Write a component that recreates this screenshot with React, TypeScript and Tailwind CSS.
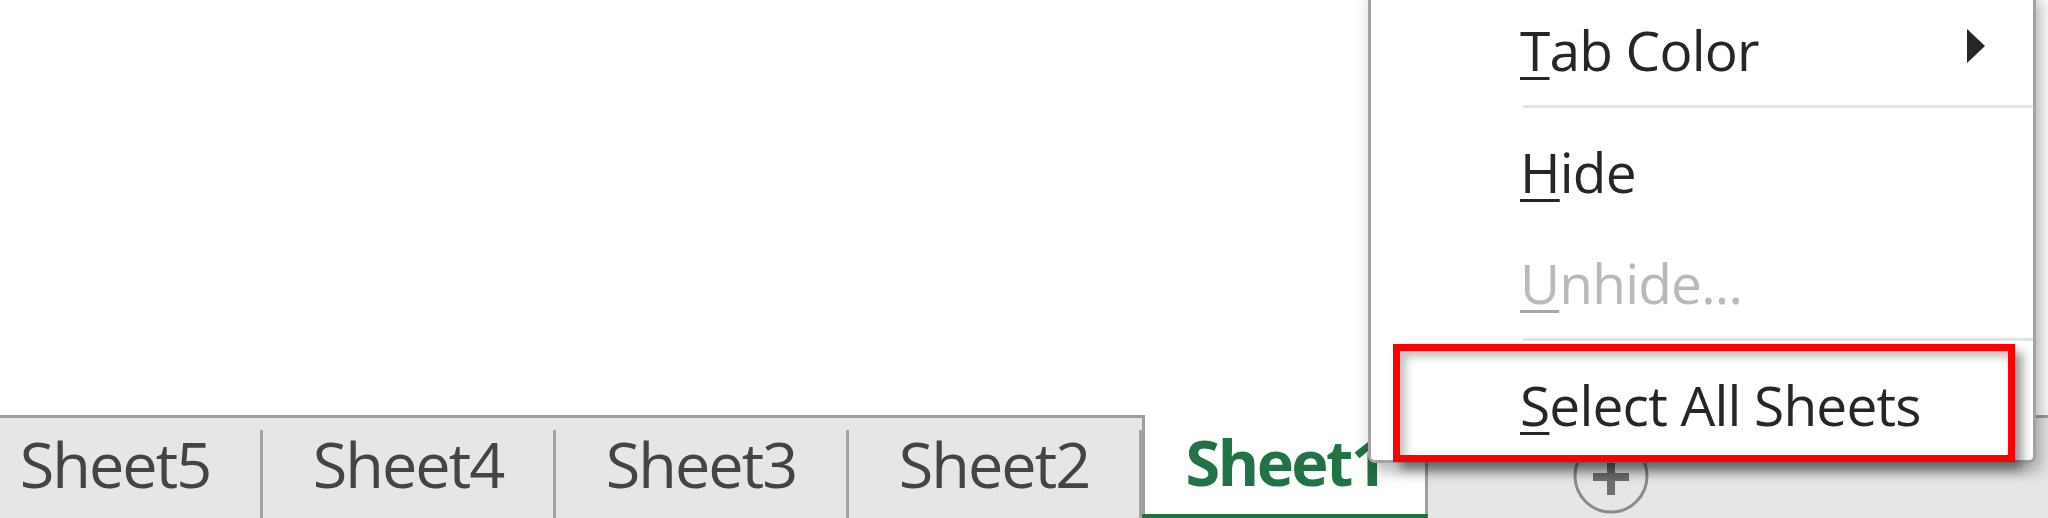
const font = { fontFamily: '"Open Sans", "Noto Sans", sans-serif' };

const inactiveTabs = ["Sheet5", "Sheet4", "Sheet3", "Sheet2"];

function Key({ ch, dim }: { ch: string; dim?: boolean }) {
  return (
    <span
      className={`underline decoration-[3px] underline-offset-[6px] ${
        dim ? "decoration-[#a8a8a8]" : "decoration-[#262626]"
      }`}
    >
      {ch}
    </span>
  );
}

function MenuItem({
  children,
  dim,
  arrow,
  boxed,
}: {
  children: React.ReactNode;
  dim?: boolean;
  arrow?: boolean;
  boxed?: boolean;
}) {
  return (
    <div className="relative flex h-[111px] items-center justify-between pl-[149px] pr-[48px]">
      <span
        className={`text-[55px] leading-none tracking-[-0.8px] ${
          dim ? "text-[#b9b9b9]" : "text-[#262626]"
        }`}
      >
        {children}
      </span>
      {arrow && (
        <svg width="18" height="34" viewBox="0 0 18 34" className="mb-[7px]">
          <polygon points="0,0 18,17 0,34" fill="#262626" />
        </svg>
      )}
      {boxed && (
        // red annotation frame drawn over the hovered item
        <div className="pointer-events-none absolute left-[22px] right-[18px] top-[-5px] bottom-[-2px] border-[7px] border-[#ff0000] shadow-[7px_8px_10px_rgba(0,0,0,0.42),inset_6px_6px_9px_rgba(0,0,0,0.24)]" />
      )}
    </div>
  );
}

function Separator() {
  return (
    <div className="h-[11px] pl-[152px]">
      <div className="h-[3px] bg-[#e3e3e3]" />
    </div>
  );
}

export default function App() {
  return (
    <div
      className="relative flex h-[518px] w-[2048px] flex-col overflow-hidden bg-white"
      style={font}
    >
      {/* sheet area */}
      <div className="h-[415px] bg-white" />

      {/* sheet tab bar */}
      <div className="flex h-[103px] items-stretch border-t-[3px] border-[#9f9f9f] bg-[#e6e6e6]">
        <div className="ml-[-30px] flex items-stretch">
          {inactiveTabs.map((name) => (
            <div key={name} className="flex items-stretch">
              <div className="flex w-[290px] items-center justify-center pb-[10px] text-[63px] leading-none tracking-[-2px] text-[#444444]">
                {name}
              </div>
              <div className="mt-[12px] w-[3px] bg-[#a3a3a3]" />
            </div>
          ))}
        </div>
        <div className="mt-[-3px] flex w-[286px] flex-col bg-white">
          <div className="flex flex-1 items-center justify-center border-x-[3px] border-[#9f9f9f] pb-[6px] text-[63px] font-bold leading-none tracking-[-2.5px] text-[#217346]">
            Sheet1
          </div>
          <div className="h-[4px] bg-[#217346]" />
        </div>
        <svg
          width="80"
          height="80"
          viewBox="0 0 80 80"
          className="ml-[143px] mt-[18px] shrink-0"
        >
          <circle cx="40" cy="40" r="36" fill="none" stroke="#8a8a8a" strokeWidth="3" />
          <rect x="22" y="37" width="36" height="8" fill="#6e6e6e" />
          <rect x="36" y="23" width="8" height="36" fill="#6e6e6e" />
        </svg>
      </div>

      {/* context menu */}
      <div className="absolute left-[1368px] top-[-9px] w-[668px] rounded-b-[7px] border-[3px] border-[#a3a3a3] bg-white shadow-[0_0_18px_rgba(0,0,0,0.10),6px_10px_14px_rgba(0,0,0,0.22)]">
        <MenuItem arrow>
          <Key ch="T" />
          ab Color
        </MenuItem>
        <Separator />
        <MenuItem>
          <Key ch="H" />
          ide
        </MenuItem>
        <MenuItem dim>
          <Key ch="U" dim />
          nhide...
        </MenuItem>
        <Separator />
        <MenuItem boxed>
          <Key ch="S" />
          elect All Sheets
        </MenuItem>
      </div>
    </div>
  );
}
